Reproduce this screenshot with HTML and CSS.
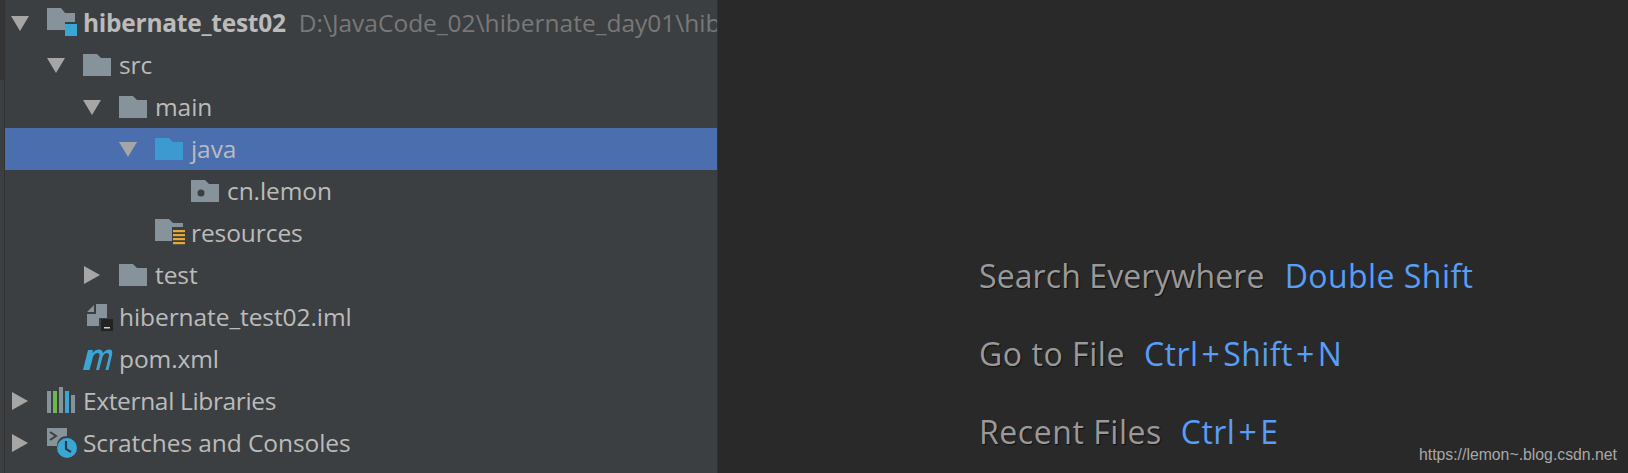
FILE: index.html
```html
<!DOCTYPE html>
<html lang="en">
<head>
<meta charset="utf-8">
<title>Project</title>
<link rel="stylesheet" href="styles.css">
</head>
<body>
<div class="app">
  <div class="strip"><div class="strip-thumb"></div></div>
  <div class="tree">
    <div class="row d0">
      <svg class="chev" viewBox="0 0 18 18"><path d="M0 2H18L9 17Z"/></svg>
      <svg class="icon" viewBox="0 0 30 30"><path class="f" d="M0 -1H14L18 4H28V13H18V21H0Z"/><rect class="b" x="18" y="15" width="12" height="12"/></svg>
      <span class="label strong">hibernate_test02</span><span class="path">D:\JavaCode_02\hibernate_day01\hibernate_test02</span>
    </div>
    <div class="row d1">
      <svg class="chev" viewBox="0 0 18 18"><path d="M0 2H18L9 17Z"/></svg>
      <svg class="icon" viewBox="0 0 30 30"><path class="f" d="M0 3H14L18 7H28V25H0Z"/></svg>
      <span class="label">src</span>
    </div>
    <div class="row d2">
      <svg class="chev" viewBox="0 0 18 18"><path d="M0 2H18L9 17Z"/></svg>
      <svg class="icon" viewBox="0 0 30 30"><path class="f" d="M0 3H14L18 7H28V25H0Z"/></svg>
      <span class="label">main</span>
    </div>
    <div class="row d3 selected">
      <svg class="chev" viewBox="0 0 18 18"><path d="M0 2H18L9 17Z"/></svg>
      <svg class="icon" viewBox="0 0 30 30"><path class="b2" d="M0 3H14L18 7H28V25H0Z"/></svg>
      <span class="label">java</span>
    </div>
    <div class="row d4">
      <span class="chev-space"></span>
      <svg class="icon" viewBox="0 0 30 30"><path class="f" d="M0 3H14L18 7H28V25H0Z"/><circle class="hole" cx="10" cy="16" r="3.5"/></svg>
      <span class="label">cn.lemon</span>
    </div>
    <div class="row d3">
      <span class="chev-space"></span>
      <svg class="icon" viewBox="0 0 30 30"><path class="f" d="M0 0H14L18 4H28V8H17V22H0Z"/><g class="o"><rect x="18" y="11" width="12" height="2.2"/><rect x="18" y="15" width="12" height="2.2"/><rect x="18" y="19" width="12" height="2.2"/><rect x="18" y="23" width="12" height="2.2"/></g></svg>
      <span class="label">resources</span>
    </div>
    <div class="row d2">
      <svg class="chev" viewBox="0 0 18 18"><path d="M1 0V18L17 9Z"/></svg>
      <svg class="icon" viewBox="0 0 30 30"><path class="f" d="M0 3H14L18 7H28V25H0Z"/></svg>
      <span class="label">test</span>
    </div>
    <div class="row d1">
      <span class="chev-space"></span>
      <svg class="icon" viewBox="0 0 30 30"><path class="f" d="M4 9L11 2V9ZM13 1H24V15H16V23H4V11H13Z"/><rect class="k" x="18" y="16" width="12" height="12"/><rect class="w" x="21" y="24" width="6" height="1.5"/></svg>
      <span class="label">hibernate_test02.iml</span>
    </div>
    <div class="row d1">
      <span class="chev-space"></span>
      <svg class="icon" viewBox="0 0 30 30"><path class="mvn" d="M0 25L5 5H10L9.500 8C11.500 5.500 14 4.500 16 4.500C18 4.500 19.500 5.500 20 8C22 5.500 24.500 4.500 26.500 4.500C29.500 4.500 29.500 7.500 29 10L25.500 25H22.500L26 11C26.300 9.500 25.500 8 24 8C22 8 20 10 19.500 12L16 25H13L16.500 11C16.800 9.500 16 8 14.500 8C12.500 8 10.500 10 10 12L6.500 25Z"/></svg>
      <span class="label">pom.xml</span>
    </div>
    <div class="row d0">
      <svg class="chev" viewBox="0 0 18 18"><path d="M1 0V18L17 9Z"/></svg>
      <svg class="icon" viewBox="0 0 30 30"><rect class="f" x="0" y="4" width="4" height="22"/><rect class="g" x="6" y="4" width="4" height="22"/><rect class="f" x="12" y="0" width="4" height="26"/><rect class="b" x="18" y="4" width="4" height="22"/><rect class="f" x="24" y="8" width="4" height="18"/></svg>
      <span class="label tight">External Libraries</span>
    </div>
    <div class="row d0">
      <svg class="chev" viewBox="0 0 18 18"><path d="M1 0V18L17 9Z"/></svg>
      <svg class="icon" viewBox="0 0 30 30"><path class="f" d="M0 -1H20V7C14 7 10 11 10 17H0Z"/><path class="pr" d="M3 3L9 7L3 11"/><circle class="b" cx="20" cy="19" r="10"/><path class="cl" d="M19 12V20L24 23"/></svg>
      <span class="label">Scratches and Consoles</span>
    </div>
  </div>
  <div class="welcome">
    <div class="hint"><span class="hint-name">Search Everywhere</span><span class="hint-key">Double Shift</span></div>
    <div class="hint"><span class="hint-name wide">Go to File</span><span class="hint-key">Ctrl<span class="plus">+</span>Shift<span class="plus">+</span>N</span></div>
    <div class="hint"><span class="hint-name wide">Recent Files</span><span class="hint-key">Ctrl<span class="plus">+</span>E</span></div>
    <div class="watermark">https://lemon~.blog.csdn.net</div>
  </div>
</div>
</body>
</html>
```
FILE: styles.css
```css
* { box-sizing: border-box; }
html, body { margin: 0; padding: 0; height: 100%; background: #292929; overflow: hidden; }
.app { display: flex; width: 1628px; height: 473px; font-family: "Open Sans", "Noto Sans", sans-serif; }
.strip { width: 5px; background: #3c3f41; border-right: 1px solid #323232; }
.strip-thumb { height: 80px; background: #333536; }
.tree { width: 712px; padding-top: 2px; background: #3c3f41; overflow: hidden; }
.row { display: flex; align-items: center; height: 42px; padding-bottom: 2px; white-space: nowrap; color: #bbbbbb; font-size: 24.5px; }
.row.selected { background: #4b6eaf; }
.d0 { padding-left: 6px; }
.d1 { padding-left: 42px; }
.d2 { padding-left: 78px; }
.d3 { padding-left: 114px; }
.d4 { padding-left: 150px; }
.chev, .chev-space { width: 18px; height: 18px; flex: none; margin-right: 18px; margin-top: 2px; }
.chev path { fill: #a6a6a6; }
.icon { width: 30px; height: 30px; flex: none; margin-right: 6px; margin-top: 4px; overflow: visible; }
.label { letter-spacing: -0.08px; }
.strong { font-weight: 700; letter-spacing: -0.25px; }
.tight { letter-spacing: -0.35px; }
.path { margin-left: 13px; color: #787878; }
.f { fill: #87939a; }
.b { fill: #3aa6d6; }
.b2 { fill: #3d9ad1; }
.hole { fill: #3c3f41; }
.o rect { fill: #e5a83b; }
.k { fill: #232323; }
.w { fill: #d0d0d0; }
.mvn { fill: #3aa6d6; }
.g { fill: #71b84c; }
.pr { fill: none; stroke: #3c3f41; stroke-width: 2; }
.cl { fill: none; stroke: #2b3a44; stroke-width: 2.2; }
.welcome { position: relative; flex: 1; padding: 236px 0 0 261px; border-left: 1px solid #323232; background: #292929; }
.hint { display: flex; align-items: center; height: 78px; font-size: 32px; white-space: nowrap; }
.hint-name { color: #999999; text-shadow: 1px 1px 1px #111111; margin-right: 20px; letter-spacing: 0.1px; }
.hint-name.wide { margin-right: 19px; letter-spacing: 0.55px; }
.hint-key { color: #589df6; letter-spacing: 0.45px; }
.plus { margin: 0 3px; }
.watermark { position: absolute; right: 11px; bottom: 9px; font-family: "Liberation Sans", sans-serif; font-size: 15.8px; color: #a8a8a8; }
```
